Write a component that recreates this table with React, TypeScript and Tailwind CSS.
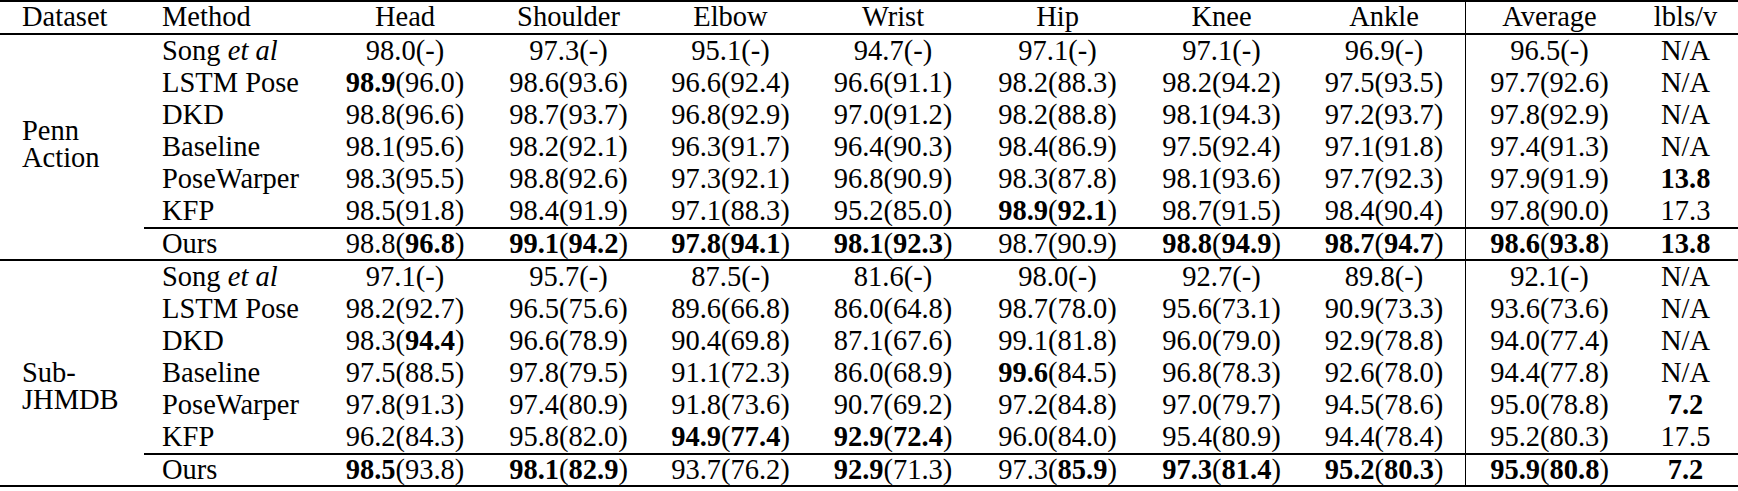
import React from 'react';

// Bold parts are wrapped in *...* (odd split segments are bold)
type Row = { method: React.ReactNode; cells: string[]; lbls: string };

const cols = 'grid grid-cols-[179px_164px_163px_161px_164px_165px_163px_162px_168px_105px]';

const song = (
  <span>
    Song <i className="italic">et al</i>
  </span>
);

const penn: Row[] = [
  { method: song, cells: ['98.0(-)', '97.3(-)', '95.1(-)', '94.7(-)', '97.1(-)', '97.1(-)', '96.9(-)', '96.5(-)'], lbls: 'N/A' },
  { method: 'LSTM Pose', cells: ['*98.9*(96.0)', '98.6(93.6)', '96.6(92.4)', '96.6(91.1)', '98.2(88.3)', '98.2(94.2)', '97.5(93.5)', '97.7(92.6)'], lbls: 'N/A' },
  { method: 'DKD', cells: ['98.8(96.6)', '98.7(93.7)', '96.8(92.9)', '97.0(91.2)', '98.2(88.8)', '98.1(94.3)', '97.2(93.7)', '97.8(92.9)'], lbls: 'N/A' },
  { method: 'Baseline', cells: ['98.1(95.6)', '98.2(92.1)', '96.3(91.7)', '96.4(90.3)', '98.4(86.9)', '97.5(92.4)', '97.1(91.8)', '97.4(91.3)'], lbls: 'N/A' },
  { method: 'PoseWarper', cells: ['98.3(95.5)', '98.8(92.6)', '97.3(92.1)', '96.8(90.9)', '98.3(87.8)', '98.1(93.6)', '97.7(92.3)', '97.9(91.9)'], lbls: '*13.8*' },
  { method: 'KFP', cells: ['98.5(91.8)', '98.4(91.9)', '97.1(88.3)', '95.2(85.0)', '*98.9*(*92.1*)', '98.7(91.5)', '98.4(90.4)', '97.8(90.0)'], lbls: '17.3' },
];
const pennOurs: Row = {
  method: 'Ours',
  cells: ['98.8(*96.8*)', '*99.1*(*94.2*)', '*97.8*(*94.1*)', '*98.1*(*92.3*)', '98.7(90.9)', '*98.8*(*94.9*)', '*98.7*(*94.7*)', '*98.6*(*93.8*)'],
  lbls: '*13.8*',
};

const jhmdb: Row[] = [
  { method: song, cells: ['97.1(-)', '95.7(-)', '87.5(-)', '81.6(-)', '98.0(-)', '92.7(-)', '89.8(-)', '92.1(-)'], lbls: 'N/A' },
  { method: 'LSTM Pose', cells: ['98.2(92.7)', '96.5(75.6)', '89.6(66.8)', '86.0(64.8)', '98.7(78.0)', '95.6(73.1)', '90.9(73.3)', '93.6(73.6)'], lbls: 'N/A' },
  { method: 'DKD', cells: ['98.3(*94.4*)', '96.6(78.9)', '90.4(69.8)', '87.1(67.6)', '99.1(81.8)', '96.0(79.0)', '92.9(78.8)', '94.0(77.4)'], lbls: 'N/A' },
  { method: 'Baseline', cells: ['97.5(88.5)', '97.8(79.5)', '91.1(72.3)', '86.0(68.9)', '*99.6*(84.5)', '96.8(78.3)', '92.6(78.0)', '94.4(77.8)'], lbls: 'N/A' },
  { method: 'PoseWarper', cells: ['97.8(91.3)', '97.4(80.9)', '91.8(73.6)', '90.7(69.2)', '97.2(84.8)', '97.0(79.7)', '94.5(78.6)', '95.0(78.8)'], lbls: '*7.2*' },
  { method: 'KFP', cells: ['96.2(84.3)', '95.8(82.0)', '*94.9*(*77.4*)', '*92.9*(*72.4*)', '96.0(84.0)', '95.4(80.9)', '94.4(78.4)', '95.2(80.3)'], lbls: '17.5' },
];
const jhmdbOurs: Row = {
  method: 'Ours',
  cells: ['*98.5*(93.8)', '*98.1*(*82.9*)', '93.7(76.2)', '*92.9*(71.3)', '97.3(*85.9*)', '*97.3*(*81.4*)', '*95.2*(*80.3*)', '*95.9*(*80.8*)'],
  lbls: '*7.2*',
};

const Rich = ({ text }: { text: string }) => (
  <span>
    {text.split('*').map((part, i) =>
      i % 2 === 1 ? <b key={i} className="font-bold">{part}</b> : <span key={i}>{part}</span>
    )}
  </span>
);

const DataRow = ({ row, h }: { row: Row; h: string }) => (
  <div className={`${cols} ${h}`}>
    <div className="flex items-center pl-[18px] whitespace-nowrap">
      <span>{row.method}</span>
    </div>
    {row.cells.map((c, i) => (
      <div
        key={i}
        className={`flex items-center justify-center whitespace-nowrap ${i === 7 ? 'border-l border-black' : ''}`}
      >
        <Rich text={c} />
      </div>
    ))}
    <div className="flex items-center justify-center whitespace-nowrap">
      <Rich text={row.lbls} />
    </div>
  </div>
);

const Section = ({ name, rows, ours, offset }: { name: string[]; rows: Row[]; ours: Row; offset: string }) => (
  <div className="flex">
    <div className={`w-[144px] shrink-0 flex flex-col justify-center pl-[22px] leading-[27px] ${offset}`}>
      {name.map((n) => (
        <span key={n}>{n}</span>
      ))}
    </div>
    <div className="flex flex-col w-[1594px]">
      {rows.map((r, i) => (
        <DataRow key={i} row={r} h="h-[32px]" />
      ))}
      <div className="h-[2px] bg-black" />
      <DataRow row={ours} h="h-[30px]" />
    </div>
  </div>
);

export default function App() {
  const headers = ['Head', 'Shoulder', 'Elbow', 'Wrist', 'Hip', 'Knee', 'Ankle'];
  return (
    <div className="w-[1738px] h-[491px] bg-white text-black text-[28.5px] leading-none font-['Liberation_Serif','Times_New_Roman',serif]">
      <div className="h-[2px] bg-black" />
      <div className="grid grid-cols-[144px_179px_164px_163px_161px_164px_165px_163px_162px_168px_105px] h-[31px]">
        <div className="flex items-center pl-[22px]">Dataset</div>
        <div className="flex items-center pl-[18px]">Method</div>
        {headers.map((h) => (
          <div key={h} className="flex items-center justify-center">
            {h}
          </div>
        ))}
        <div className="flex items-center justify-center border-l border-black">Average</div>
        <div className="flex items-center justify-center">lbls/v</div>
      </div>
      <div className="h-[2px] bg-black" />
      <Section name={['Penn', 'Action']} rows={penn} ours={pennOurs} offset="pb-[6px]" />
      <div className="h-[2px] bg-black" />
      <Section name={['Sub-', 'JHMDB']} rows={jhmdb} ours={jhmdbOurs} offset="pt-[26px]" />
      <div className="h-[2px] bg-black" />
    </div>
  );
}
